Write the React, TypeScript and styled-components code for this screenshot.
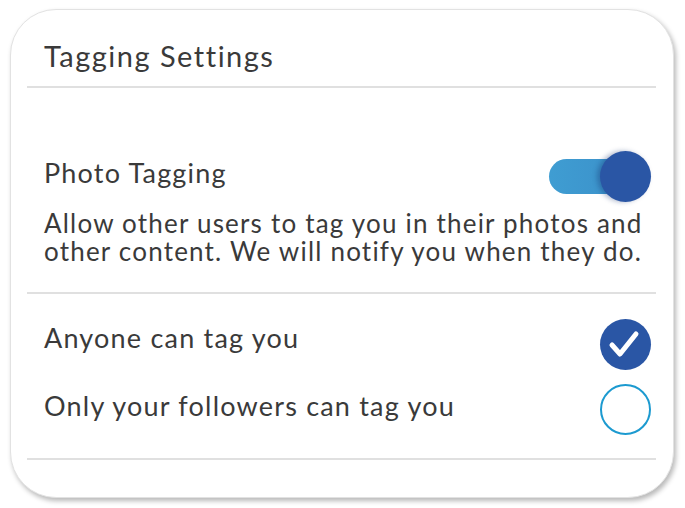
import React from "react";
import styled, { createGlobalStyle } from "styled-components";

const Global = createGlobalStyle`
  html, body { margin: 0; padding: 0; background: #ffffff; }
  body { font-family: "Lato", "Noto Sans", sans-serif; color: #3a3a3a; }
`;

const Page = styled.div`
  width: 685px;
  height: 508px;
  padding: 9px 0 0 10px;
  box-sizing: border-box;
`;

const Card = styled.div`
  width: 664px;
  height: 489px;
  box-sizing: border-box;
  background: #ffffff;
  border: 1px solid #e2e2e2;
  border-radius: 46px;
  box-shadow: 2px 3px 5px rgba(0, 0, 0, 0.28);
  display: flex;
  flex-direction: column;
  padding: 0 16px;
`;

const Title = styled.h1`
  margin: 0;
  box-sizing: border-box;
  height: 76px;
  padding: 29px 0 0 17px;
  font-size: 29px;
  line-height: 34px;
  letter-spacing: 1.5px;
  font-weight: 400;
  color: #3a3a3a;
`;

const Divider = styled.div`
  height: 2px;
  background: #e0e0e0;
  margin-right: 1px;
`;

const Section = styled.div<{ $height: number; $top: number }>`
  height: ${(p) => p.$height}px;
  padding-top: ${(p) => p.$top}px;
  box-sizing: border-box;
  display: flex;
  flex-direction: column;
`;

const Row = styled.div<{ $gap?: number }>`
  display: flex;
  align-items: flex-start;
  justify-content: space-between;
  padding: 0 6px 0 17px;
  margin-top: ${(p) => p.$gap ?? 0}px;
`;

const Label = styled.span<{ $offset: number }>`
  margin-top: ${(p) => p.$offset}px;
  font-size: 27px;
  line-height: 32px;
  letter-spacing: 1.2px;
  color: #3a3a3a;
`;

const Description = styled.p`
  margin: 7px 0 0;
  padding-left: 17px;
  font-size: 26px;
  line-height: 28px;
  letter-spacing: 1.2px;
  color: #3a3a3a;
`;

const Track = styled.div`
  position: relative;
  width: 102px;
  height: 51px;
`;

const TrackBar = styled.div`
  position: absolute;
  left: 0;
  top: 8px;
  width: 92px;
  height: 35px;
  border-radius: 18px;
  background: linear-gradient(90deg, #3f9dd2, #3b8ec8);
`;

const Knob = styled.div`
  position: absolute;
  right: 0;
  top: 0;
  width: 51px;
  height: 51px;
  border-radius: 50%;
  background: #2a56a5;
  box-shadow: -3px 0 5px rgba(20, 50, 110, 0.35);
`;

const Radio = styled.div<{ $checked: boolean }>`
  width: 51px;
  height: 51px;
  flex: none;
  box-sizing: border-box;
  border-radius: 50%;
  display: flex;
  align-items: center;
  justify-content: center;
  background: ${(p) => (p.$checked ? "#2a56a5" : "#ffffff")};
  border: ${(p) => (p.$checked ? "none" : "2px solid #1c9ad0")};
`;

export default function App() {
  return (
    <>
      <Global />
      <Page>
        <Card>
          <Title>Tagging Settings</Title>
          <Divider />
          <Section $height={204} $top={63}>
            <Row>
              <Label $offset={6}>Photo Tagging</Label>
              <Track>
                <TrackBar />
                <Knob />
              </Track>
            </Row>
            <Description>
              Allow other users to tag you in their photos and
              <br />
              other content. We will notify you when they do.
            </Description>
          </Section>
          <Divider />
          <Section $height={164} $top={25}>
            <Row>
              <Label $offset={3}>Anyone can tag you</Label>
              <Radio $checked>
                <svg width="51" height="51" viewBox="0 0 51 51">
                  <path
                    d="M12 26 L20 35 L36 15"
                    fill="none"
                    stroke="#ffffff"
                    strokeWidth="5"
                    strokeLinecap="round"
                    strokeLinejoin="round"
                  />
                </svg>
              </Radio>
            </Row>
            <Row $gap={14}>
              <Label $offset={6}>Only your followers can tag you</Label>
              <Radio $checked={false} />
            </Row>
          </Section>
          <Divider />
        </Card>
      </Page>
    </>
  );
}
